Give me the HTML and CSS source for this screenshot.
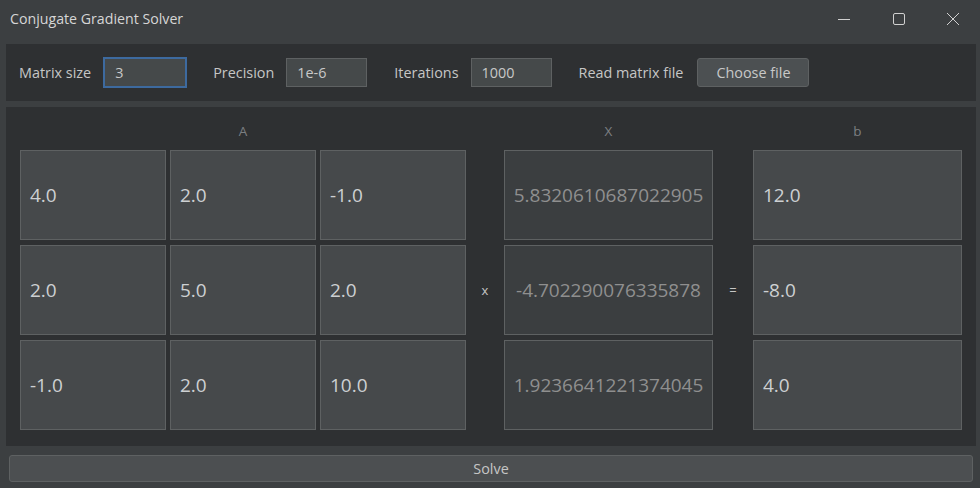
FILE: index.html
```html
<!DOCTYPE html>
<html>
<head>
<meta charset="utf-8">
<link rel="stylesheet" href="styles.css">
</head>
<body>
<div class="window">
  <div class="titlebar">
    <div class="title">Conjugate Gradient Solver</div>
    <div class="controls">
      <svg class="ctl" width="14" height="14" viewBox="0 0 14 14"><path d="M1 7.5h12" stroke="#d0d0d0" stroke-width="1"/></svg>
      <svg class="ctl" width="14" height="14" viewBox="0 0 14 14"><rect x="1.5" y="1.5" width="11" height="11" rx="1.5" fill="none" stroke="#d0d0d0" stroke-width="1"/></svg>
      <svg class="ctl" width="14" height="14" viewBox="0 0 14 14"><path d="M1 1L13 13M13 1L1 13" stroke="#d0d0d0" stroke-width="1"/></svg>
    </div>
  </div>
  <div class="toolbar">
    <span class="lbl">Matrix size</span>
    <div class="input focused w84">3</div>
    <span class="lbl">Precision</span>
    <div class="input w81">1e-6</div>
    <span class="lbl">Iterations</span>
    <div class="input w81">1000</div>
    <span class="lbl">Read matrix file</span>
    <div class="btn">Choose file</div>
  </div>
  <div class="matrix">
    <div class="grid">
      <div class="head span3">A</div>
      <div class="head op"></div>
      <div class="head">X</div>
      <div class="head op"></div>
      <div class="head">b</div>

      <div class="cell">4.0</div>
      <div class="cell">2.0</div>
      <div class="cell">-1.0</div>
      <div class="op"></div>
      <div class="cell ro">5.8320610687022905</div>
      <div class="op"></div>
      <div class="cell">12.0</div>

      <div class="cell">2.0</div>
      <div class="cell">5.0</div>
      <div class="cell">2.0</div>
      <div class="op sym">x</div>
      <div class="cell ro">-4.702290076335878</div>
      <div class="op sym">=</div>
      <div class="cell">-8.0</div>

      <div class="cell">-1.0</div>
      <div class="cell">2.0</div>
      <div class="cell">10.0</div>
      <div class="op"></div>
      <div class="cell ro">1.9236641221374045</div>
      <div class="op"></div>
      <div class="cell">4.0</div>
    </div>
  </div>
  <div class="solve">Solve</div>
</div>
</body>
</html>
```

FILE: styles.css
```css
* { box-sizing: border-box; }
html, body { margin: 0; padding: 0; }
body {
  width: 980px;
  height: 488px;
  background: #3c3f41;
  font-family: "Open Sans", "Noto Sans", sans-serif;
  color: #c8c8c8;
  overflow: hidden;
}
.window {
  display: flex;
  flex-direction: column;
  height: 488px;
}
.titlebar {
  height: 38px;
  display: flex;
  align-items: center;
  justify-content: space-between;
  padding-left: 10px;
}
.title {
  font-size: 14.2px;
  color: #d6d6d6;
  margin-top: -2px;
}
.controls {
  display: flex;
  align-items: center;
  margin-top: -1px;
}
.ctl { display: block; }
.controls .ctl:nth-child(1) { margin-right: 41px; }
.controls .ctl:nth-child(2) { margin-right: 40px; }
.controls .ctl:nth-child(3) { margin-right: 20px; }

.toolbar {
  margin: 6px 4px 0 6px;
  height: 57px;
  background: #2e3032;
  display: flex;
  align-items: center;
  padding-left: 13px;
  font-size: 14.4px;
}
.lbl { color: #c6c6c6; margin-right: 12px; }
.input {
  height: 29px;
  background: #45494a;
  border: 1px solid #5e6162;
  color: #c8c8c8;
  padding-left: 10px;
  line-height: 27px;
  font-size: 14.4px;
  margin-right: 27px;
}
.input.focused {
  border: 2px solid #3d6a9f;
  height: 31px;
  line-height: 27px;
  margin-right: 26px;
}
.w84 { width: 84px; }
.w81 { width: 81px; }
.btn {
  width: 112px;
  height: 29px;
  background: #4c5052;
  border: 1px solid #5e6162;
  border-radius: 3px;
  text-align: center;
  line-height: 27px;
  color: #c8c8c8;
  font-size: 14.4px;
  margin-left: 2px;
}

.matrix {
  margin: 6px 4px 0 6px;
  height: 339px;
  background: #2e3032;
  padding: 13px 14px 0 14px;
}
.grid {
  display: grid;
  grid-template-columns: 146px 146px 146px 30px 209px 32px 209px;
  grid-template-rows: 25px 90px 90px 90px;
  column-gap: 4px;
  row-gap: 5px;
}
.head {
  color: #7c7f82;
  font-size: 13.5px;
  text-align: center;
  line-height: 22px;
}
.span3 { grid-column: span 3; }
.cell {
  background: #46494b;
  border: 1px solid #5e6162;
  font-size: 19px;
  color: #cdd0d2;
  display: flex;
  align-items: center;
  padding-left: 9px;
}
.cell.ro {
  background: #3b3e40;
  color: #8f8f8f;
  justify-content: center;
  padding-left: 0;
}
.op {
  display: flex;
  align-items: center;
  justify-content: center;
}
.sym {
  font-size: 13px;
  color: #c6c6c6;
}

.solve {
  margin: 9px 7px 0 9px;
  height: 27px;
  background: #4c4f51;
  border: 1px solid #5e6162;
  border-radius: 3px;
  text-align: center;
  line-height: 25px;
  font-size: 14.4px;
  color: #c6c6c6;
}
```
